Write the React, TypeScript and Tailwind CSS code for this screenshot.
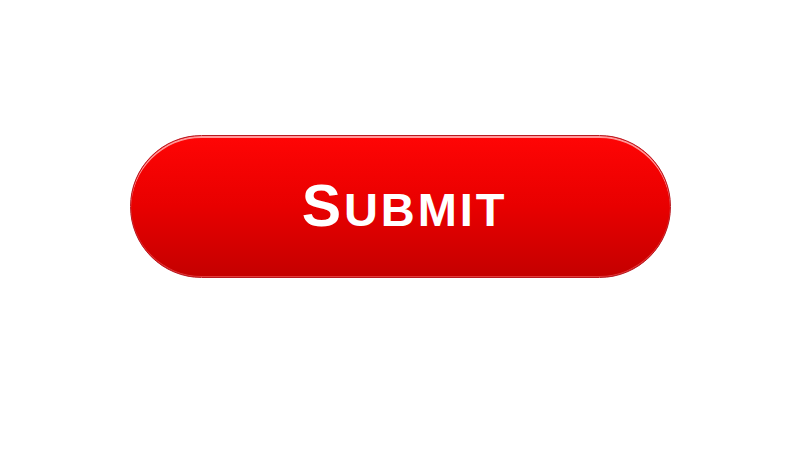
export default function App() {
  return (
    <div className="h-[450px] w-[800px] bg-white pl-[130px] pt-[135px]">
      <button
        type="button"
        className="flex h-[143px] w-[541px] items-center justify-center rounded-full border border-[#b81820] bg-gradient-to-b from-[#ff0505] via-[#e80000] to-[#c40000] shadow-[inset_0_2px_0_rgba(255,170,170,0.9),inset_0_-1px_0_rgba(255,120,120,0.5)]"
        style={{ fontFamily: '"Liberation Sans", Arial, sans-serif' }}
      >
        <span className="flex items-baseline pl-[8px] font-bold uppercase leading-none tracking-[0.18em] text-white">
          <span className="text-[59px]">S</span>
          <span className="text-[47px]">ubmit</span>
        </span>
      </button>
    </div>
  );
}
